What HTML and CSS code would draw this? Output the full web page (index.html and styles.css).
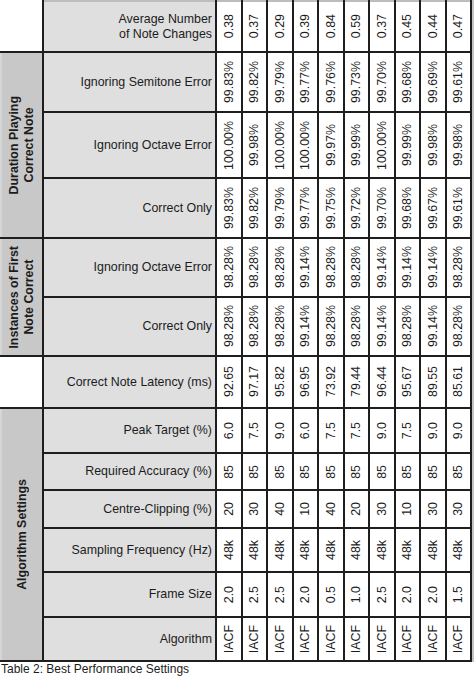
FILE: index.html
```html
<!DOCTYPE html>
<html>
<head>
<meta charset="utf-8">
<link rel="stylesheet" href="styles.css">
</head>
<body>
<div class="table">
  <!-- row 1 -->
  <div class="empty"></div>
  <div class="lab top">Average Number<br>of Note Changes</div>
  <div class="d top"><span>0.38</span></div><div class="d top"><span>0.37</span></div><div class="d top"><span>0.29</span></div><div class="d top"><span>0.39</span></div><div class="d top"><span>0.84</span></div><div class="d top"><span>0.59</span></div><div class="d top"><span>0.37</span></div><div class="d top"><span>0.45</span></div><div class="d top"><span>0.44</span></div><div class="d top"><span>0.47</span></div>
  <!-- row 2 -->
  <div class="grp span3"><span>Duration Playing<br>Correct Note</span></div>
  <div class="lab">Ignoring Semitone Error</div>
  <div class="d"><span>99.83%</span></div><div class="d"><span>99.82%</span></div><div class="d"><span>99.79%</span></div><div class="d"><span>99.77%</span></div><div class="d"><span>99.76%</span></div><div class="d"><span>99.73%</span></div><div class="d"><span>99.70%</span></div><div class="d"><span>99.68%</span></div><div class="d"><span>99.69%</span></div><div class="d"><span>99.61%</span></div>
  <!-- row 3 -->
  <div class="lab">Ignoring Octave Error</div>
  <div class="d"><span>100.00%</span></div><div class="d"><span>99.98%</span></div><div class="d"><span>100.00%</span></div><div class="d"><span>100.00%</span></div><div class="d"><span>99.97%</span></div><div class="d"><span>99.99%</span></div><div class="d"><span>100.00%</span></div><div class="d"><span>99.99%</span></div><div class="d"><span>99.98%</span></div><div class="d"><span>99.98%</span></div>
  <!-- row 4 -->
  <div class="lab">Correct Only</div>
  <div class="d"><span>99.83%</span></div><div class="d"><span>99.82%</span></div><div class="d"><span>99.79%</span></div><div class="d"><span>99.77%</span></div><div class="d"><span>99.75%</span></div><div class="d"><span>99.72%</span></div><div class="d"><span>99.70%</span></div><div class="d"><span>99.68%</span></div><div class="d"><span>99.67%</span></div><div class="d"><span>99.61%</span></div>
  <!-- row 5 -->
  <div class="grp span2"><span>Instances of First<br>Note Correct</span></div>
  <div class="lab">Ignoring Octave Error</div>
  <div class="d"><span>98.28%</span></div><div class="d"><span>98.28%</span></div><div class="d"><span>98.28%</span></div><div class="d"><span>99.14%</span></div><div class="d"><span>98.28%</span></div><div class="d"><span>98.28%</span></div><div class="d"><span>99.14%</span></div><div class="d"><span>99.14%</span></div><div class="d"><span>99.14%</span></div><div class="d"><span>98.28%</span></div>
  <!-- row 6 -->
  <div class="lab">Correct Only</div>
  <div class="d"><span>98.28%</span></div><div class="d"><span>98.28%</span></div><div class="d"><span>98.28%</span></div><div class="d"><span>99.14%</span></div><div class="d"><span>98.28%</span></div><div class="d"><span>98.28%</span></div><div class="d"><span>99.14%</span></div><div class="d"><span>98.28%</span></div><div class="d"><span>99.14%</span></div><div class="d"><span>98.28%</span></div>
  <!-- row 7 -->
  <div class="empty"></div>
  <div class="lab">Correct Note Latency (ms)</div>
  <div class="d"><span>92.65</span></div><div class="d"><span>97.17</span></div><div class="d"><span>95.82</span></div><div class="d"><span>96.95</span></div><div class="d"><span>73.92</span></div><div class="d"><span>79.44</span></div><div class="d"><span>96.44</span></div><div class="d"><span>95.67</span></div><div class="d"><span>89.55</span></div><div class="d"><span>85.61</span></div>
  <!-- row 8 -->
  <div class="grp span6"><span>Algorithm Settings</span></div>
  <div class="lab">Peak Target (%)</div>
  <div class="d"><span>6.0</span></div><div class="d"><span>7.5</span></div><div class="d"><span>9.0</span></div><div class="d"><span>6.0</span></div><div class="d"><span>7.5</span></div><div class="d"><span>7.5</span></div><div class="d"><span>9.0</span></div><div class="d"><span>7.5</span></div><div class="d"><span>9.0</span></div><div class="d"><span>9.0</span></div>
  <!-- row 9 -->
  <div class="lab">Required Accuracy (%)</div>
  <div class="d"><span>85</span></div><div class="d"><span>85</span></div><div class="d"><span>85</span></div><div class="d"><span>85</span></div><div class="d"><span>85</span></div><div class="d"><span>85</span></div><div class="d"><span>85</span></div><div class="d"><span>85</span></div><div class="d"><span>85</span></div><div class="d"><span>85</span></div>
  <!-- row 10 -->
  <div class="lab">Centre-Clipping (%)</div>
  <div class="d"><span>20</span></div><div class="d"><span>30</span></div><div class="d"><span>40</span></div><div class="d"><span>10</span></div><div class="d"><span>40</span></div><div class="d"><span>20</span></div><div class="d"><span>30</span></div><div class="d"><span>10</span></div><div class="d"><span>30</span></div><div class="d"><span>30</span></div>
  <!-- row 11 -->
  <div class="lab">Sampling Frequency (Hz)</div>
  <div class="d"><span>48k</span></div><div class="d"><span>48k</span></div><div class="d"><span>48k</span></div><div class="d"><span>48k</span></div><div class="d"><span>48k</span></div><div class="d"><span>48k</span></div><div class="d"><span>48k</span></div><div class="d"><span>48k</span></div><div class="d"><span>48k</span></div><div class="d"><span>48k</span></div>
  <!-- row 12 -->
  <div class="lab">Frame Size</div>
  <div class="d"><span>2.0</span></div><div class="d"><span>2.5</span></div><div class="d"><span>2.5</span></div><div class="d"><span>2.0</span></div><div class="d"><span>0.5</span></div><div class="d"><span>1.0</span></div><div class="d"><span>2.5</span></div><div class="d"><span>2.0</span></div><div class="d"><span>2.0</span></div><div class="d"><span>1.5</span></div>
  <!-- row 13 -->
  <div class="lab">Algorithm</div>
  <div class="d"><span>IACF</span></div><div class="d"><span>IACF</span></div><div class="d"><span>IACF</span></div><div class="d"><span>IACF</span></div><div class="d"><span>IACF</span></div><div class="d"><span>IACF</span></div><div class="d"><span>IACF</span></div><div class="d"><span>IACF</span></div><div class="d"><span>IACF</span></div><div class="d"><span>IACF</span></div>
</div>
<div class="caption">Table 2: Best Performance Settings</div>
</body>
</html>
```
FILE: styles.css
```css
html, body {
  margin: 0;
  padding: 0;
  background: #ffffff;
}
body {
  font-family: "Liberation Sans", Arial, sans-serif;
  color: #1c1c1c;
  width: 474px;
}
.table {
  display: grid;
  grid-template-columns: 42px 171px repeat(10, 23.5px);
  grid-template-rows: 51px 58px 64px 58px 57px 57px 50px 43px 35px 36px 42px 43px 42px;
  gap: 2px;
  background: #1e1e1e;
  padding: 0 2px 2px 0;
  border-right: 2px solid #c4c4c4;
  width: 470px;
}
.table > div {
  box-sizing: border-box;
}
.empty {
  background: #ffffff;
}
.top {
  border-top: 2px solid #bdbdbd;
}
.lab {
  background: #dfdfdf;
  display: flex;
  align-items: center;
  justify-content: flex-end;
  text-align: right;
  padding-right: 3px;
  font-size: 12.4px;
  line-height: 15px;
}
.d {
  background: #ffffff;
  display: flex;
  align-items: center;
  justify-content: center;
  font-size: 12.4px;
}
.d span {
  writing-mode: vertical-rl;
  transform: rotate(180deg);
  line-height: 1;
  white-space: nowrap;
}
.grp {
  background: #c8c8c8;
  border-left: 2px solid #d6d6d6;
  display: flex;
  align-items: center;
  justify-content: center;
  font-weight: bold;
  font-size: 12.4px;
  line-height: 15px;
}
.grp span {
  writing-mode: vertical-rl;
  transform: rotate(180deg);
  text-align: center;
  white-space: nowrap;
}
.span3 { grid-row: span 3; }
.span2 { grid-row: span 2; }
.span6 { grid-row: span 6; }
.caption {
  font-size: 12px;
  line-height: 15px;
  padding-left: 1px;
  color: #1c1c1c;
}
```
